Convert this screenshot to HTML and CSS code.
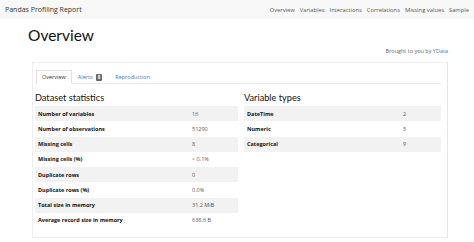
FILE: index.html
```html
<!DOCTYPE html>
<html>
<head>
<meta charset="utf-8">
<link rel="stylesheet" href="styles.css">
</head>
<body>
<nav class="navbar">
  <span class="brand">Pandas Profiling Report</span>
  <ul class="nav-links">
    <li>Overview</li>
    <li>Variables</li>
    <li>Interactions</li>
    <li>Correlations</li>
    <li>Missing values</li>
    <li>Sample</li>
  </ul>
</nav>
<main class="page">
  <h1 class="title">Overview</h1>
  <p class="credit">Brought to you by <a class="link">YData</a></p>
  <section class="card">
    <ul class="tabs">
      <li class="tab active">Overview</li>
      <li class="tab">Alerts <span class="badge">8</span></li>
      <li class="tab">Reproduction</li>
    </ul>
    <div class="tab-content">
      <div class="col col-left">
        <h2 class="section-title">Dataset statistics</h2>
        <table class="stats">
          <tr><th>Number of variables</th><td>16</td></tr>
          <tr><th>Number of observations</th><td>51290</td></tr>
          <tr><th>Missing cells</th><td>8</td></tr>
          <tr><th>Missing cells (%)</th><td>&lt; 0.1%</td></tr>
          <tr><th>Duplicate rows</th><td>0</td></tr>
          <tr><th>Duplicate rows (%)</th><td>0.0%</td></tr>
          <tr><th>Total size in memory</th><td>31.2 MiB</td></tr>
          <tr><th>Average record size in memory</th><td>638.6 B</td></tr>
        </table>
      </div>
      <div class="col col-right">
        <h2 class="section-title">Variable types</h2>
        <table class="stats">
          <tr><th>DateTime</th><td>2</td></tr>
          <tr><th>Numeric</th><td>5</td></tr>
          <tr><th>Categorical</th><td>9</td></tr>
        </table>
      </div>
    </div>
  </section>
</main>
</body>
</html>
```

FILE: styles.css
```css
* { box-sizing: border-box; }
html, body { margin: 0; padding: 0; background: #fff; }
body {
  font-family: "Open Sans", "Noto Sans", sans-serif;
  color: #333;
  width: 474px;
  height: 242px;
  overflow: hidden;
}
.navbar {
  height: 19px;
  background: #f8f8f8;
  display: flex;
  align-items: center;
  justify-content: space-between;
  padding: 0 5px 0 5px;
}
.brand {
  font-size: 7px;
  color: #333;
}
.nav-links {
  list-style: none;
  margin: 0;
  padding: 0;
  display: flex;
  gap: 5px;
  font-size: 5.8px;
  color: #555;
}
.page {
  padding: 0 26px 0 28px;
}
.title {
  font-family: "Lato", "Open Sans", sans-serif;
  font-weight: 400;
  font-size: 15.5px;
  line-height: 20px;
  margin: 6px 0 0 0;
  color: #111;
}
.credit {
  margin: 2px 0 0 0;
  text-align: right;
  font-size: 5.5px;
  line-height: 8px;
  color: #666;
}
.link { color: #3b7ac2; }
.card {
  margin: 7px 0 0 4px;
  height: 176px;
  border: 1px solid #eee;
  border-right-color: #e6e6e6;
  padding: 7px 6px 0 2px;
}
.tabs {
  list-style: none;
  margin: 0;
  padding: 0 0 0 1px;
  display: flex;
  border-bottom: 1px solid #e6e6e6;
  height: 14px;
}
.tab {
  font-size: 5.5px;
  color: #3b7ac2;
  height: 14px;
  padding: 0 7px 0 6px;
  display: flex;
  align-items: center;
}
.tab.active {
  color: #333;
  border: 1px solid #e0e0e0;
  border-bottom-color: #fff;
  background: #fff;
  margin-bottom: -1px;
  padding: 0 5px;
}
.badge {
  display: inline-block;
  background: #666;
  color: #fff;
  font-size: 4.5px;
  font-weight: 700;
  padding: 0 2px;
  border-radius: 1px;
  line-height: 7px;
  margin-left: 3px;
}
.tab-content {
  display: flex;
  gap: 6px;
  padding-top: 7px;
}
.col-left { width: 204px; }
.col-right { width: 198px; }
.section-title {
  font-family: "Lato", "Open Sans", sans-serif;
  font-size: 9.2px;
  font-weight: 400;
  margin: 0 0 2px 0;
  line-height: 13px;
  color: #111;
}
.stats {
  width: 100%;
  border-collapse: collapse;
  font-size: 5.5px;
}
.stats tr { height: 15.25px; }
.stats tr:nth-child(odd) { background: #f2f2f2; }
.stats th {
  text-align: left;
  font-weight: 700;
  color: #111;
  padding: 0 0 0 3px;
}
.col-left .stats th { width: 157px; }
.col-right .stats th { width: 159px; }
.stats td {
  color: #555;
  padding: 0;
}
```
